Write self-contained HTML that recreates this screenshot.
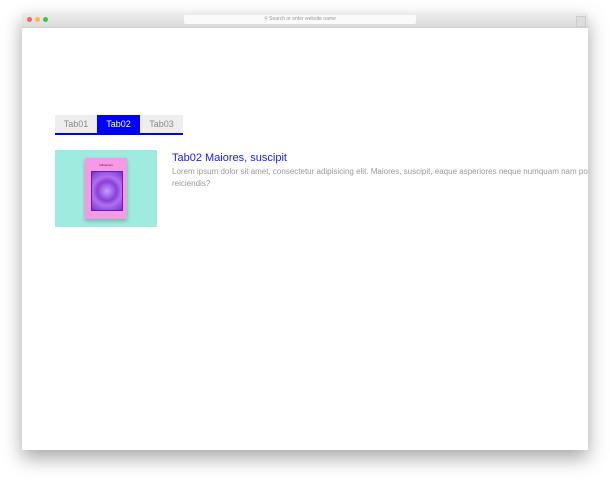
<!DOCTYPE html><html><head><style>
body{margin:0;width:610px;height:481px;background:#fff;position:relative;overflow:hidden;font-family:"Liberation Sans",sans-serif}
.win{position:absolute;left:22px;top:13px;width:566px;height:437px;background:#fff;box-shadow:0 8px 18px rgba(0,0,0,.35);overflow:hidden}
.bar{height:14px;background:linear-gradient(#ececec,#dcdcdc);border-bottom:1px solid #d0d0d0;position:relative}
.d{position:absolute;top:4px;width:5px;height:5px;border-radius:50%}
.url{position:absolute;left:162px;top:2px;width:232px;height:9px;background:#fafafa;border-radius:2px;font-size:5px;color:#999;text-align:center;line-height:9px}
.tabs{position:absolute;left:33px;top:102px;display:flex;border-bottom:2px solid #0000ff}
.t{height:18px;line-height:18px;font-size:9px;color:#888;background:#eee;text-align:center}
.img{position:absolute;left:33px;top:137px;width:102px;height:77px;background:#a0ebe0}
.book{position:absolute;left:30px;top:8px;width:42px;height:61px;background:#f79ae6;box-shadow:0 2px 4px rgba(0,0,0,.25)}
.art{position:absolute;left:6px;top:13px;width:30px;height:38px;background:radial-gradient(circle,#c6a0ff,#8a3fd8 40%,#b070f0 60%,#7a2fd0);border:1px solid #6020b0}
h3{position:absolute;left:150px;top:139px;margin:0;font-size:11px;font-weight:normal;color:#1a1aff;white-space:nowrap}
p{position:absolute;left:150px;top:153px;margin:0;font-size:8px;line-height:12px;color:#999;width:416px;white-space:nowrap;overflow:hidden}
</style></head><body>
<div class="win">
<div class="bar"><span class="d" style="left:5px;background:#fc605c"></span><span class="d" style="left:13px;background:#fdbc40"></span><span class="d" style="left:21px;background:#34c84a"></span><div class="url">⚲ Search or enter website name</div><div style="position:absolute;right:2px;top:3px;width:8px;height:9px;background:#ddd;border:1px solid #ccc"></div></div>
<div class="tabs"><div class="t" style="width:42px">Tab01</div><div class="t" style="width:43px;background:#0000ff;color:#fff">Tab02</div><div class="t" style="width:43px">Tab03</div></div>
<div class="img"><div class="book"><div style="position:absolute;top:5px;width:100%;text-align:center;font-size:3px;color:#503">Influences</div><div class="art"></div></div></div>
<h3>Tab02 Maiores, suscipit</h3>
<p>Lorem ipsum dolor sit amet, consectetur adipisicing elit. Maiores, suscipit, eaque asperiores neque numquam nam po<br>reiciendis?</p>
</div>
</body></html>
